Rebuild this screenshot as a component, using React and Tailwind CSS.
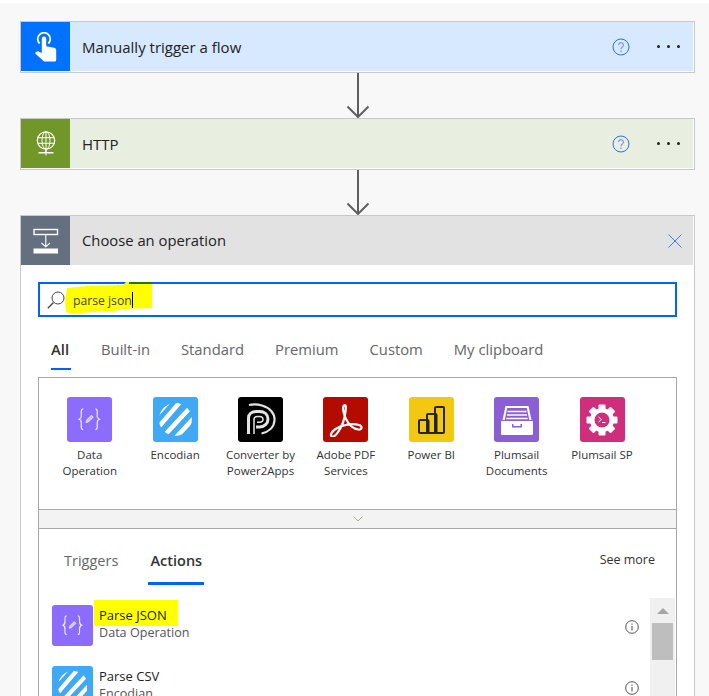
import React from 'react';

const FONT = { fontFamily: '"Open Sans", "Noto Sans", sans-serif' };

function TouchIcon() {
  return (
    <svg width="22" height="30" viewBox="0 0 22 30" fill="none">
      <path d="M4.600 11.500a6.300 6.300 0 1 1 8.800 0" stroke="#fff" strokeWidth="1.800" />
      <path
        fill="#fff"
        d="M6.800 6.800a2.200 2.200 0 0 1 4.400 0v7.400l7.800 1.600c1.500.3 2.200 1.200 2.200 2.600V28a1.500 1.500 0 0 1-1.500 1.500H9L.5 21.800c-.5-.5-.4-1.200.2-1.500l1.500-.8c.5-.2 1-.2 1.500 0l3.100 1.400z"
      />
    </svg>
  );
}

function GlobeIcon() {
  return (
    <svg width="20" height="25" viewBox="0 0 20 25" fill="none" stroke="#fff" strokeWidth="1">
      <circle cx="10" cy="9.500" r="8.700" strokeWidth="1.300" />
      <ellipse cx="10" cy="9.500" rx="4" ry="8.700" />
      <path d="M10 1v17M1.800 6.700h16.400M1.800 12.300h16.400" />
      <path d="M10 18.500v3M2.500 21.800h15" strokeWidth="1.600" />
      <path d="M10 22.500v2" />
    </svg>
  );
}

function OperationIcon() {
  return (
    <svg width="26" height="26" viewBox="0 0 26 26" fill="none" stroke="#fff">
      <rect x="1" y="1.500" width="23.500" height="5" strokeWidth="1.400" />
      <path d="M12.800 6.500v12M8.500 15l4.300 3.800L17 15" strokeWidth="1.100" />
      <rect x="0.500" y="20.500" width="24.500" height="5" fill="#fff" stroke="none" />
    </svg>
  );
}

function DataIcon({ size }) {
  return (
    <div
      className="flex shrink-0 items-center justify-center rounded-[3px] bg-[#8c6cff]"
      style={{ width: size, height: size }}
    >
      <svg width={size * 0.5} height={size * 0.5} viewBox="0 0 24 24" fill="none" stroke="#f1edff">
        <path
          strokeWidth="1.300"
          d="M5.500 1C3 1 3.500 4 3.500 7S3.500 11 1 12c2.500 1 2.500 2 2.500 5S3 23 5.500 23M18.500 1c2.500 0 2 3 2 6s0 4 2.500 5c-2.500 1-2.500 2-2.500 5s.5 6-2 6"
        />
        <path fill="#cfc2ff" strokeWidth="0.900" d="M8.500 15.500l.8-2.800 5-5 2 2-5 5z" />
      </svg>
    </div>
  );
}

function EncodianIcon({ size }) {
  return (
    <div
      className="flex shrink-0 items-center justify-center rounded-[3px] bg-[#3fa9f5]"
      style={{ width: size, height: size }}
    >
      <svg width={size * 0.73} height={size * 0.73} viewBox="0 0 33 33">
        <defs>
          <clipPath id={`enc${size}`}>
            <circle cx="16.500" cy="16.500" r="16.500" />
          </clipPath>
        </defs>
        <g clipPath={`url(#enc${size})`} stroke="#fff" strokeWidth="4.600">
          <path d="M-8 18L14 -6M-2 26L22 -2M6 32L32 4M14 38L38 12" />
        </g>
      </svg>
    </div>
  );
}

function ConverterIcon() {
  return (
    <div className="flex h-[45px] w-[45px] items-center justify-center rounded-[3px] bg-black">
      <svg width="38" height="38" viewBox="0 0 38 38" fill="none" stroke="#e4e4e4">
        <path strokeWidth="2.200" d="M8 4c4-.8 9-.6 13 .5 8 2.300 13 8 12.500 15-.5 7-6 11.500-13 13" />
        <path strokeWidth="3" d="M7.500 33V17c0-4 3.500-6.500 8-6.500h3c5 0 8.500 3 8.500 7.500s-3.500 8-8.500 8H15" />
        <path strokeWidth="1.500" d="M13 33V18.500c0-2 1.500-3 3.500-3h2c2 0 3.500 1 3.500 2.800s-1.500 3-3.500 3H16" />
      </svg>
    </div>
  );
}

function AdobeIcon() {
  return (
    <div className="flex h-[45px] w-[45px] items-center justify-center rounded-[3px] bg-[#b30b00]">
      <svg width="34" height="34" viewBox="0 0 34 34" fill="none" stroke="#fff" strokeWidth="2.200">
        <path d="M16 2c-3 0-2.500 7 1 14 3 6 8 10 12.500 10.500 4 .4 4-3.500.5-4.500-6-2-17-.5-23.500 4-5 3.500-5.500 7-3.500 7.500 3 .8 8-6 11-14 2-5.500 4-17.500 2-17.500z" />
      </svg>
    </div>
  );
}

function PowerBiIcon() {
  return (
    <div className="flex h-[45px] w-[45px] items-center justify-center rounded-[3px] bg-[#f2c811]">
      <svg width="27" height="28" viewBox="0 0 27 28" fill="none" stroke="#252423" strokeWidth="2">
        <rect x="1" y="14" width="9.500" height="13" rx="1" />
        <rect x="9" y="8" width="9.500" height="19" rx="1" />
        <rect x="17" y="1" width="9" height="26" rx="1" />
      </svg>
    </div>
  );
}

function DocumentsIcon() {
  return (
    <div className="flex h-[45px] w-[45px] items-center justify-center rounded-[3px] bg-[#8b5fd3]">
      <svg width="32" height="30" viewBox="0 0 32 30">
        <path fill="#fff" d="M4.500 1h23l3 14h-2.200L25.800 3H6.200L3.700 15H1.500z" />
        <path stroke="#fff" strokeWidth="1.500" d="M6.500 6.500h19M6 10h20M5.300 13.500h21.400" />
        <path
          fill="#fff"
          fillRule="evenodd"
          d="M0 16h32v12.500a1.500 1.500 0 0 1-1.500 1.500h-29A1.500 1.500 0 0 1 0 28.500zM11 19v3.500h10V19h-1.500v2h-7v-2z"
        />
      </svg>
    </div>
  );
}

function GearIcon() {
  const teeth = [0, 45, 90, 135, 180, 225, 270, 315];
  return (
    <div className="flex h-[45px] w-[45px] items-center justify-center rounded-[3px] bg-[#cf2e7d]">
      <svg width="32" height="32" viewBox="0 0 32 32">
        {teeth.map((a) => (
          <rect key={a} x="12.500" y="0.500" width="7" height="7" rx="1" fill="#fff" transform={`rotate(${a} 16 16)`} />
        ))}
        <circle cx="16" cy="16" r="12" fill="#fff" />
        <circle cx="16" cy="16" r="7.500" fill="#cf2e7d" />
        <path d="M12.500 13l3 2.500-3 2.500" stroke="#fff" strokeWidth="1" fill="none" />
        <path d="M16 18.500h3.500" stroke="#fff" strokeWidth="1" />
      </svg>
    </div>
  );
}

function HelpIcon() {
  return (
    <svg width="18" height="18" viewBox="0 0 18 18" fill="none">
      <circle cx="9" cy="9" r="8" stroke="#2f6ff0" strokeWidth="1" />
      <path d="M6.600 7a2.400 2.400 0 1 1 3.800 2c-.9.600-1.400 1-1.400 2.200" stroke="#6f93ee" strokeWidth="1.100" />
      <circle cx="9" cy="13.300" r=".8" fill="#6f93ee" />
    </svg>
  );
}

function MoreDots() {
  return (
    <div className="flex items-center gap-[7px]">
      <span className="h-[3px] w-[3px] rounded-full bg-[#222]" />
      <span className="h-[3px] w-[3px] rounded-full bg-[#222]" />
      <span className="h-[3px] w-[3px] rounded-full bg-[#222]" />
    </div>
  );
}

function Arrow() {
  return (
    <div className="flex h-[45px] justify-center">
      <svg width="26" height="45" viewBox="0 0 26 45" fill="none" stroke="#5e5e5e" strokeWidth="2">
        <path d="M13 0v44M2.500 33.500L13 44l10.500-10.500" />
      </svg>
    </div>
  );
}

function InfoIcon() {
  return (
    <svg width="14" height="14" viewBox="0 0 14 14" fill="none" stroke="#555">
      <circle cx="7" cy="7" r="6.300" strokeWidth="1" />
      <path d="M7 6v4.500" strokeWidth="1.100" />
      <path d="M7 3.500v1.200" strokeWidth="1.100" />
    </svg>
  );
}

function FlowCard({ icon, iconBg, headerBg, title }) {
  return (
    <div className="h-[52px] border border-[#c8c8c8] bg-white">
      <div className={`mr-px flex h-[49px] items-center ${headerBg}`}>
        <div className={`flex h-full w-[49px] items-center justify-center ${iconBg}`}>{icon}</div>
        <span className="ml-3 flex-1 pt-[2px] text-[15px] text-[#222]">{title}</span>
        <HelpIcon />
        <div className="ml-[27px] mr-[13px]">
          <MoreDots />
        </div>
      </div>
    </div>
  );
}

const connectors = [
  { key: 'data', icon: <DataIcon size={45} />, label: ['Data', 'Operation'] },
  { key: 'encodian', icon: <EncodianIcon size={45} />, label: ['Encodian'] },
  { key: 'converter', icon: <ConverterIcon />, label: ['Converter by', 'Power2Apps'] },
  { key: 'adobe', icon: <AdobeIcon />, label: ['Adobe PDF', 'Services'] },
  { key: 'powerbi', icon: <PowerBiIcon />, label: ['Power BI'] },
  { key: 'documents', icon: <DocumentsIcon />, label: ['Plumsail', 'Documents'] },
  { key: 'sp', icon: <GearIcon />, label: ['Plumsail SP'] },
];

const tabs = ['Built-in', 'Standard', 'Premium', 'Custom', 'My clipboard'];

export default function App() {
  return (
    <div className="h-[696px] w-[709px] overflow-hidden bg-[#f8f8f8]" style={FONT}>
      <div className="h-[3px] bg-white" />
      <div className="ml-5 mt-[18px] w-[675px]">
        <FlowCard
          icon={<TouchIcon />}
          iconBg="bg-[#0072ff]"
          headerBg="bg-[#d6e9ff]"
          title="Manually trigger a flow"
        />
        <Arrow />
        <FlowCard icon={<GlobeIcon />} iconBg="bg-[#709727]" headerBg="bg-[#e9efe0]" title="HTTP" />
        <Arrow />

        <div className="h-[600px] border-x border-t border-[#c8c8c8] bg-white">
          <div className="mr-px flex h-[49px] items-center bg-[#e2e2e2]">
            <div className="flex h-full w-[49px] items-center justify-center bg-[#647080]">
              <OperationIcon />
            </div>
            <span className="ml-3 flex-1 text-[14.800px] text-[#222]">Choose an operation</span>
            <svg className="mr-[11px]" width="14" height="14" viewBox="0 0 14 14" stroke="#3f7bf0" strokeWidth="1">
              <path d="M.5.500l13 13M13.500.500l-13 13" />
            </svg>
          </div>

          <div className="px-[17px]">
            {/* search box, with the hand-drawn marker stroke over it */}
            <div className="relative mt-[17px] flex h-[35px] items-center border-2 border-[#0062ff] bg-white">
              <svg className="absolute left-[25px] top-[-2px]" width="87" height="33" viewBox="0 0 87 33">
                <path
                  fill="#ffff00"
                  d="M2 6l20-2 36-1 3-3h26v26l-28 1-10 2-22 1-20 2-6-2-1-12z"
                />
                <rect x="64" y="0" width="23" height="2" fill="#1c7a14" />
              </svg>
              <svg className="relative ml-[7px]" width="18" height="18" viewBox="0 0 18 18" fill="none" stroke="#444" strokeWidth="1">
                <circle cx="11" cy="7" r="6" />
                <path d="M6.500 11.500L.800 17.200" strokeWidth="1.300" />
              </svg>
              <span className="relative ml-[8px] pt-[3px] text-[12.200px] text-[#444]">parse json</span>
              <span className="relative h-[16px] w-px bg-black" />
            </div>

            {/* category tabs */}
            <div className="flex h-[60px] items-start pt-[21px] text-[14.800px] text-[#666]">
              <div className="ml-[13px] flex flex-col">
                <span className="font-semibold text-[#333]">All</span>
                <span className="mt-[8px] h-[2px] w-5 bg-[#0062ff]" />
              </div>
              <div className="ml-[30px] flex gap-[31px]">
                {tabs.map((t) => (
                  <span key={t}>{t}</span>
                ))}
              </div>
            </div>

            {/* connector browser */}
            <div className="border border-[#a8a8a8]">
              <div className="flex h-[131px] pl-[8px] pt-[19px]">
                {connectors.map((c) => (
                  <div key={c.key} className="flex w-[85.400px] flex-col items-center">
                    {c.icon}
                    <div className="mt-[5px] text-center text-[11.500px] leading-[16px] text-[#333]">
                      {c.label.map((l) => (
                        <div key={l} className="whitespace-nowrap">{l}</div>
                      ))}
                    </div>
                  </div>
                ))}
              </div>

              <div className="flex h-[20px] items-center justify-center border-y border-[#aaa] bg-[#f3f3f3]">
                <svg width="10" height="6" viewBox="0 0 10 6" fill="none" stroke="#b9a792">
                  <path d="M.500.500L5 5 9.500.500" />
                </svg>
              </div>

              <div className="flex items-start justify-between pr-[21px] pt-[21px]">
                <div className="ml-[25px] flex gap-[30px] text-[14.500px]">
                  <span className="text-[#666]">Triggers</span>
                  <div className="flex flex-col items-center">
                    <span className="font-semibold text-[#333]">Actions</span>
                    <span className="mt-[10px] h-[3px] w-[56px] bg-[#0062ff]" />
                  </div>
                </div>
                <span className="pt-px text-[12.500px] text-[#333]">See more</span>
              </div>

              {/* action list */}
              <div className="relative mt-[13px] flex">
                <div className="flex-1 pl-[13px] pr-[11px] pt-[7px]">
                  <div className="flex h-[61px] items-start">
                    <DataIcon size={41} />
                    <div className="relative ml-[6px] flex-1 leading-[18px]">
                      <div className="absolute left-[-5px] top-[-5px] h-[26px] w-[84px] bg-[#ffff00]" />
                      <div className="relative pt-[1px] text-[13px] text-[#222]">Parse JSON</div>
                      <div className="relative text-[12.600px] text-[#555]">Data Operation</div>
                    </div>
                    <div className="mt-[15px]">
                      <InfoIcon />
                    </div>
                  </div>
                  <div className="flex h-[61px] items-start">
                    <EncodianIcon size={41} />
                    <div className="ml-[6px] flex-1 leading-[18px]">
                      <div className="pt-[1px] text-[13px] text-[#222]">Parse CSV</div>
                      <div className="text-[12.600px] text-[#555]">Encodian</div>
                    </div>
                    <div className="mt-[15px]">
                      <InfoIcon />
                    </div>
                  </div>
                </div>
                <div className="mr-px flex h-[120px] w-[25px] flex-col items-center bg-[#f0f0f0] pt-[10px]">
                  <span className="h-0 w-0 border-x-[6px] border-b-[6px] border-x-transparent border-b-[#a6a6a6]" />
                  <span className="mt-[9px] h-[37px] w-[21px] bg-[#bebebe]" />
                </div>
              </div>
            </div>
          </div>
        </div>
      </div>
    </div>
  );
}
